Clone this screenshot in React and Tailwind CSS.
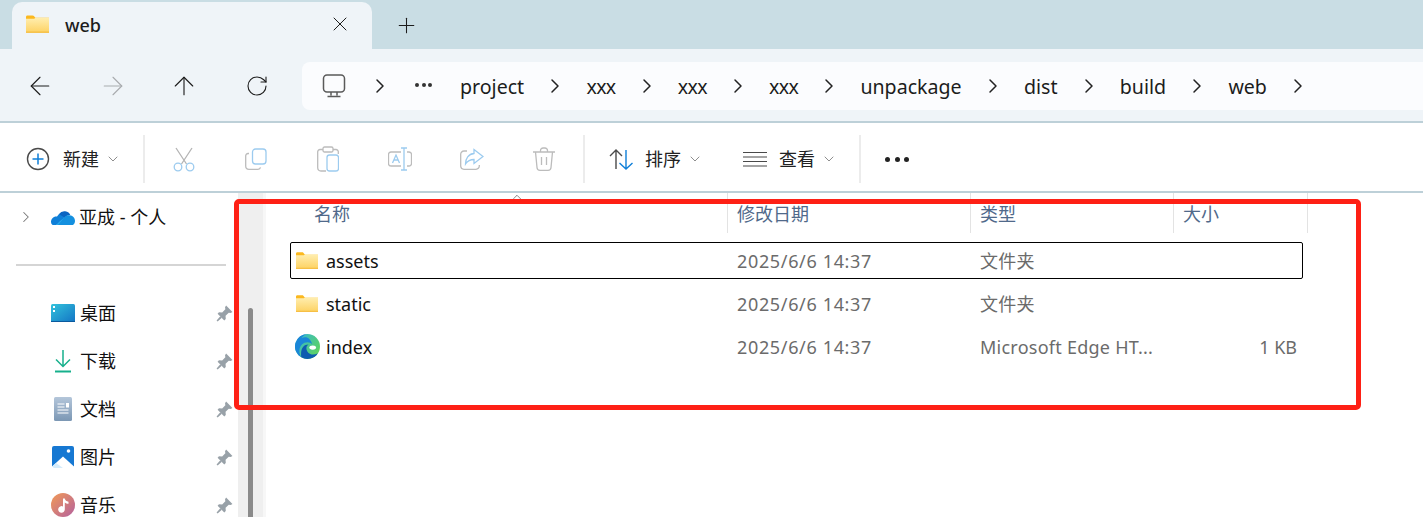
import React from "react";
import { ArrowLeft, ArrowRight, ArrowUp, RotateCw, X, Plus, ChevronRight, ChevronDown, ChevronUp } from "lucide-react";

const crumbs = ["project", "xxx", "xxx", "xxx", "unpackage", "dist", "build", "web"];

const files = [
  { name: "assets", icon: "folder", type: "文件夹", size: "", focused: true },
  { name: "static", icon: "folder", type: "文件夹", size: "" },
  { name: "index", icon: "edge", type: "Microsoft Edge HT...", size: "1 KB" },
];

const Folder = ({ className }) => (
  <svg viewBox="0 0 24 18" className={className}>
    <defs>
      <linearGradient id="fold" x1="0" y1="0" x2="0" y2="1">
        <stop offset="0" stopColor="#ffeeb0" />
        <stop offset="1" stopColor="#fdd263" />
      </linearGradient>
    </defs>
    <path d="M0 1.500C0 .7.6 0 1.400 0h5.400c.5 0 .9.2 1.200.5L9.800 2.600H24V4H0z" fill="#fbb81f" />
    <path d="M0 3.400h8.500L10 2.400h14v15.600H0z" fill="url(#fold)" />
    <path d="M0 17h24v1H0z" fill="#f4b52e" />
  </svg>
);

const Edge = ({ className }) => (
  <svg viewBox="0 0 24 24" className={className}>
    <defs>
      <linearGradient id="edgeA" x1="0" y1="0" x2="1" y2="0.700">
        <stop offset="0" stopColor="#2fb5e0" />
        <stop offset="1" stopColor="#5fd35c" />
      </linearGradient>
    </defs>
    <circle cx="12" cy="12" r="12" fill="url(#edgeA)" />
    <path d="M12 0A12 12 0 0 0 6 22.400C3 18 3.500 11 9 8.500c3-1.300 6-.5 7.500 1.500C15 4 11 1.500 6 4 8 1.500 10 .3 12 0z" fill="#1a86d8" />
    <path d="M6 22.400A12 12 0 0 0 22 18.500C18 20.500 14 20 12 17 10 14 11 11 13 10 8 10 5 14 6 22.400z" fill="#0e5bb0" />
    <ellipse cx="17" cy="13" rx="3.200" ry="2" fill="#fff" />
  </svg>
);

const OneDrive = () => (
  <svg viewBox="0 0 25 16" className="w-[25px] h-[16px]">
    <path d="M9 5a6.500 6.500 0 0 1 11.500 1.500C18 6 16 7 15 9L9 7z" fill="#0a64c2" />
    <path d="M7 15.500A3.500 3.500 0 0 1 1 13c0-3 2.500-6 6-5.500L9 5l6 4-6 6.500z" fill="#0f7fd8" />
    <path d="M6 16h15l-7-7-4 3z" fill="#28a8ea" />
    <path d="M14 9c1-2 3.500-3.500 6-2.500 3 0 5 2.500 5 5.500 0 2-1 3-2 4H8z" fill="#1490df" />
  </svg>
);

const Desktop = () => (
  <svg viewBox="0 0 24 18" className="w-[24px] h-[18px]">
    <defs>
      <linearGradient id="desk" x1="0" y1="0" x2="1" y2="1">
        <stop offset="0" stopColor="#33c3dc" />
        <stop offset="1" stopColor="#1374c4" />
      </linearGradient>
    </defs>
    <rect width="24" height="18" rx="1.500" fill="url(#desk)" />
    <rect x="2" y="2" width="2" height="2" fill="#fff" />
    <rect x="2" y="6" width="2" height="2" fill="#fff" />
    <rect x="0" y="17" width="24" height="1" fill="#0a5a9e" />
  </svg>
);

const Download = () => (
  <svg viewBox="0 0 18 24" className="w-[18px] h-[24px]" fill="none" stroke="#17b08c" strokeWidth="1.500">
    <path d="M9 1v16M2 10.500l7 7 7-7" />
    <path d="M1 22.500h16" strokeWidth="2" />
  </svg>
);

const Doc = () => (
  <svg viewBox="0 0 18 24" className="w-[18px] h-[24px]">
    <defs>
      <linearGradient id="doc" x1="0" y1="0" x2="0" y2="1">
        <stop offset="0" stopColor="#b4c6da" />
        <stop offset="1" stopColor="#7b97b4" />
      </linearGradient>
    </defs>
    <rect width="18" height="24" rx="1.500" fill="url(#doc)" />
    <path d="M3.500 7h7M3.500 10h7M3.500 13h11M3.500 16h11" stroke="#fff" strokeWidth="1.100" />
    <rect x="12" y="6" width="3" height="4.500" fill="#fff" />
  </svg>
);

const Picture = () => (
  <svg viewBox="0 0 22 22" className="w-[22px] h-[22px]">
    <rect width="22" height="22" rx="2" fill="#1678d2" />
    <circle cx="16.500" cy="5" r="1.800" fill="#fff" />
    <path d="M0 20.500 11 10.500l11 10V22H0z" fill="#fff" />
    <path d="M0 20.500 4 17l7 5H2z" fill="#d5ecfb" />
  </svg>
);

const Music = () => (
  <svg viewBox="0 0 24 24" className="w-[24px] h-[24px]">
    <defs>
      <linearGradient id="mus" x1="0" y1="0" x2="1" y2="1">
        <stop offset="0" stopColor="#f29a55" />
        <stop offset="1" stopColor="#b4619f" />
      </linearGradient>
    </defs>
    <circle cx="12" cy="12" r="12" fill="url(#mus)" />
    <path d="M12 5.500h1.800c.3 2 1.700 2.800 3.700 3.200v2c-1.500 0-2.800-.5-3.700-1.300v7a3.300 3.300 0 1 1-1.800-2.900z" fill="#fff" />
  </svg>
);

const Pin = () => (
  <svg viewBox="0 0 16 16" className="w-[17px] h-[17px] shrink-0" fill="#98a1a8">
    <path d="M9.500.5 15.500 6.500 13.800 7.500 12 7.200 9 10.200l.2 3-1.400 1.300L1.500 8.200 2.800 6.800l3 .2 3-3L8.500 2.200z" />
    <path d="M4 10.500 5.500 12 1.500 15.500 0.500 14.500z" />
  </svg>
);

const Cut = () => (
  <svg viewBox="0 0 22 25" className="w-[22px] h-[25px]" fill="none" strokeWidth="1.300">
    <path d="M3 1l10.500 16M19 1 8.500 17" stroke="#b4b4b4" />
    <circle cx="5" cy="20" r="3.800" stroke="#9ccbef" />
    <circle cx="17" cy="20" r="3.800" stroke="#9ccbef" />
  </svg>
);

const Copy = () => (
  <svg viewBox="0 0 22 22" className="w-[22px] h-[22px]" fill="none" strokeWidth="1.300">
    <path d="M4 5.500H3a2.300 2.300 0 0 0-2.300 2.300V18A3.300 3.300 0 0 0 4 21.300h9a2.600 2.600 0 0 0 2.500-2" stroke="#bcbcbc" />
    <rect x="7.500" y="1" width="13.500" height="15" rx="3" stroke="#9ccbef" />
  </svg>
);

const Paste = () => (
  <svg viewBox="0 0 22 26" className="w-[22px] h-[26px]" fill="none" strokeWidth="1.300">
    <path d="M6 3.500H3A2.300 2.300 0 0 0 .7 5.800v16A3.300 3.300 0 0 0 4 25h5M16 3.500h3a2.300 2.300 0 0 1 2.300 2.300V8" stroke="#bcbcbc" />
    <rect x="6" y="1" width="10" height="5" rx="1.500" stroke="#bcbcbc" />
    <rect x="10" y="9" width="11.500" height="16" rx="2.500" stroke="#9ccbef" />
  </svg>
);

const Rename = () => (
  <svg viewBox="0 0 24 24" className="w-[24px] h-[24px]" fill="none" strokeWidth="1.300">
    <path d="M13 5H3a2.500 2.500 0 0 0-2.500 2.500v9A2.500 2.500 0 0 0 3 19h10M19 5h2a2.500 2.500 0 0 1 2.500 2.500v9A2.500 2.500 0 0 1 21 19h-2" stroke="#bcbcbc" />
    <path d="M13 1h6M16 1v22M13 23h6" stroke="#9ccbef" />
    <path d="M4.500 16 8 8l3.500 8M5.800 13h4.400" stroke="#9ccbef" />
  </svg>
);

const Share = () => (
  <svg viewBox="0 0 24 22" className="w-[24px] h-[22px]" fill="none" strokeWidth="1.300">
    <path d="M7 3H4a3.300 3.300 0 0 0-3.300 3.300v12A3.300 3.300 0 0 0 4 21.300h12a3.300 3.300 0 0 0 3.300-3.300v-1" stroke="#bcbcbc" />
    <path d="M14 1.500 23 8.500 14 15.500V11.500C10 11.500 7.500 13 5.500 16 5.500 10.500 8.500 6 14 5.500z" stroke="#9ccbef" />
  </svg>
);

const Trash = () => (
  <svg viewBox="0 0 22 24" className="w-[22px] h-[24px]" fill="none" stroke="#bcbcbc" strokeWidth="1.300">
    <path d="M0 5h22M7.500 5V3.500A2.500 2.500 0 0 1 10 1h2a2.500 2.500 0 0 1 2.500 2.500V5" />
    <path d="M2.500 5l1.500 15.500A3 3 0 0 0 7 23.300h8a3 3 0 0 0 3-2.800L19.500 5" />
    <path d="M8.500 10v8M13.500 10v8" />
  </svg>
);

const NewIcon = () => (
  <svg viewBox="0 0 24 24" className="w-[24px] h-[24px]" fill="none">
    <circle cx="12" cy="12" r="10.500" stroke="#4a4a4a" strokeWidth="1.400" />
    <path d="M12 6.500v11M6.500 12h11" stroke="#0f7fd8" strokeWidth="1.500" />
  </svg>
);

const SortIcon = () => (
  <svg viewBox="0 0 24 22" className="w-[24px] h-[22px]" fill="none" strokeWidth="1.400">
    <path d="M7 21V2M1 8l6-6 6 6" stroke="#4a4a4a" />
    <path d="M17 2v19M10.500 15l6.500 6 6.500-6" stroke="#0f7fd8" />
  </svg>
);

const ListIcon = () => (
  <svg viewBox="0 0 24 16" className="w-[24px] h-[16px]" fill="none" stroke="#4a4a4a" strokeWidth="1.200">
    <path d="M0 1.500h24M0 6h24M0 10.500h24M0 15h24" />
  </svg>
);

const Monitor = () => (
  <svg viewBox="0 0 24 24" className="w-[24px] h-[24px]" fill="none" stroke="#5a5a5a" strokeWidth="1.500">
    <rect x="1.500" y="1" width="21" height="17" rx="3.500" />
    <path d="M9 18v3.500M15 18v3.500M5.500 22.500h13" />
  </svg>
);

const AddressDots = () => (
  <div className="flex items-center justify-between w-[17px] ml-[23px] mb-[3px]">
    <span className="w-[4px] h-[4px] rounded-full bg-[#333]" />
    <span className="w-[4px] h-[4px] rounded-full bg-[#333]" />
    <span className="w-[4px] h-[4px] rounded-full bg-[#333]" />
  </div>
);

const MoreDots = () => (
  <div className="flex items-center justify-between w-[24px] ml-[24px]">
    <span className="w-[5px] h-[5px] rounded-full bg-[#222]" />
    <span className="w-[5px] h-[5px] rounded-full bg-[#222]" />
    <span className="w-[5px] h-[5px] rounded-full bg-[#222]" />
  </div>
);

const Sep = () => <div className="w-[2px] h-[48px] bg-[#ececec] shrink-0" />;

const NavItem = ({ icon, label }) => (
  <div className="flex items-center h-[48px]">
    <div className="w-[51px] ml-[37px] flex justify-center shrink-0">{icon}</div>
    <span className="ml-[-8px] text-[18px] text-[#111] w-[136px] shrink-0">{label}</span>
    <Pin />
  </div>
);

export default function App() {
  return (
    <div
      className="w-[1423px] h-[517px] overflow-hidden relative bg-white text-[#1c1c1c]"
      style={{ fontFamily: '"Noto Sans", "Noto Sans CJK SC", sans-serif' }}
    >
      {/* tab strip */}
      <div className="h-[49px] bg-[#c9dde4] flex items-end pl-[12px]">
        <div className="w-[360px] h-[47px] bg-[#eff4f8] rounded-t-[10px] flex items-center pl-[14px] pb-[3px]">
          <Folder className="w-[23px] h-[18px]" />
          <span className="ml-[16px] text-[18px] font-medium translate-y-[1px]">web</span>
          <X size={24} strokeWidth={1} className="ml-auto mr-[20px]" />
        </div>
        <Plus size={25} strokeWidth={1} className="ml-[22px] mb-[11px]" />
      </div>

      {/* nav row */}
      <div className="h-[74px] bg-[#eff4f8] border-b-[2px] border-[#bdd0d8] flex items-center pt-[2px]">
        <div className="w-[302px] flex items-center pl-[25px] shrink-0">
          <div className="w-[30px] flex justify-center"><ArrowLeft size={30} strokeWidth={0.9} /></div>
          <div className="w-[30px] ml-[43px] flex justify-center"><ArrowRight size={30} strokeWidth={0.9} className="text-[#a8abae]" /></div>
          <div className="w-[30px] ml-[41px] flex justify-center"><ArrowUp size={30} strokeWidth={0.9} /></div>
          <div className="w-[30px] ml-[43px] flex justify-center"><RotateCw size={24} strokeWidth={1.1} /></div>
        </div>
        <div className="flex-1 h-[48px] bg-[#fbfcfe] rounded-l-[8px] flex items-center pl-[20px] text-[19.6px]">
          <Monitor />
          <ChevronRight size={24} strokeWidth={1.5} className="text-[#222] ml-[22px]" />
          <AddressDots />
          <div className="flex items-center ml-[28px]">
            {crumbs.map((c, i) => (
              <React.Fragment key={i}>
                <span className={`leading-none translate-y-[1px] ${c === "xxx" ? "tracking-[-0.7px]" : ""}`}>{c}</span>
                <ChevronRight size={24} strokeWidth={1.5} className="text-[#222] ml-[19px] mr-[19.3px]" />
              </React.Fragment>
            ))}
          </div>
        </div>
      </div>

      {/* toolbar */}
      <div className="h-[70px] border-b-[2px] border-[#bdd0d8] flex items-center pt-[4px] text-[18px]">
        <div className="w-[143px] flex items-center pl-[26px] shrink-0">
          <NewIcon />
          <span className="ml-[13px] text-[#222]">新建</span>
          <ChevronDown size={16} strokeWidth={1} className="ml-[6px] text-[#555]" />
        </div>
        <Sep />
        <div className="w-[438px] pl-[3px] grid grid-cols-[72px_72px_72px_72px_72px_72px] justify-items-center items-center shrink-0">
          <Cut />
          <Copy />
          <Paste />
          <Rename />
          <Share />
          <Trash />
        </div>
        <Sep />
        <div className="flex items-center w-[274px] pl-[24px] shrink-0">
          <SortIcon />
          <span className="ml-[12px] text-[#222]">排序</span>
          <ChevronDown size={16} strokeWidth={1} className="ml-[6px] text-[#555]" />
          <div className="ml-[40px]"><ListIcon /></div>
          <span className="ml-[12px] text-[#222]">查看</span>
          <ChevronDown size={16} strokeWidth={1} className="ml-[6px] text-[#555]" />
        </div>
        <Sep />
        <MoreDots />
      </div>

      {/* body */}
      <div className="flex h-[324px]">
        <aside className="w-[238px] shrink-0">
          <div className="flex items-center h-[48px]">
            <ChevronRight size={18} strokeWidth={1.4} className="ml-[17px] text-[#777]" />
            <div className="ml-[15px]"><OneDrive /></div>
            <span className="ml-[4px] text-[18px] text-[#111]">亚成 - 个人</span>
          </div>
          <div className="h-[2px] bg-[#d5d5d5] ml-[16px] mr-[12px] mt-[23px] mb-[23px]" />
          <NavItem icon={<Desktop />} label="桌面" />
          <NavItem icon={<Download />} label="下载" />
          <NavItem icon={<Doc />} label="文档" />
          <NavItem icon={<Picture />} label="图片" />
          <NavItem icon={<Music />} label="音乐" />
        </aside>

        {/* scrollbar */}
        <div className="w-[25px] shrink-0 bg-[#efefef] flex justify-center pt-[115px]">
          <div className="w-[5px] h-[240px] rounded-full bg-[#8a8a8a]" />
        </div>
        <div className="w-[3px] shrink-0 bg-[#f7f7f7]" />

        <main className="flex-1 relative">
          <ChevronUp size={14} strokeWidth={1.2} className="absolute left-[244px] top-[-3px] text-[#555]" />
          <div className="flex h-[40px] text-[18px] text-[#50698a]">
            <div className="w-[461px] pl-[48px] pt-[8px]">名称</div>
            <div className="w-[243px] pl-[9px] pt-[8px] border-l border-[#e3e3e3]">修改日期</div>
            <div className="w-[203px] pl-[9px] pt-[8px] border-l border-[#e3e3e3]">类型</div>
            <div className="w-[135px] pl-[9px] pt-[8px] border-x border-[#e3e3e3]">大小</div>
          </div>
          <div className="mt-[9px] ml-[24px] w-[1013px] flex flex-col gap-[6px] text-[18px]">
            {files.map((f) => (
              <div
                key={f.name}
                className={`h-[37px] flex items-center rounded-[2px] border pl-[5px] pr-[5px] ${f.focused ? "border-black" : "border-transparent"}`}
              >
                <div className="w-[441px] flex items-center shrink-0">
                  <div className="w-[30px] shrink-0">
                    {f.icon === "folder" ? <Folder className="w-[22px] h-[17px]" /> : <Edge className="w-[25px] h-[25px] -ml-[1px]" />}
                  </div>
                  <span className="text-[#111] translate-y-[1px]">{f.name}</span>
                </div>
                <span className="w-[243px] shrink-0 text-[#6b6b6b] tracking-[0.65px] translate-y-[1px]">2025/6/6 14:37</span>
                <span className="w-[200px] shrink-0 text-[#6b6b6b] whitespace-nowrap tracking-[0.25px] translate-y-[1px]">{f.type}</span>
                <span className="flex-1 text-right text-[#6b6b6b] translate-y-[1px]">{f.size}</span>
              </div>
            ))}
          </div>
        </main>
      </div>

      {/* red annotation box */}
      <div className="absolute left-[234px] top-[199px] w-[1127px] h-[211px] border-[5px] border-[#fe2015] rounded-[5px] pointer-events-none" />
    </div>
  );
}
